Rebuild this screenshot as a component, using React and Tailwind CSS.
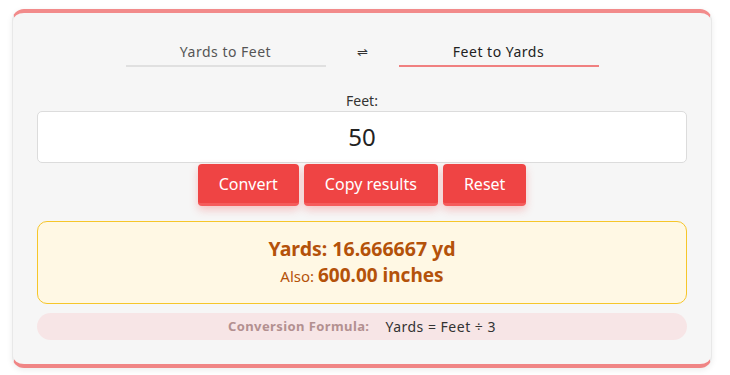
import React from "react";

export default function App() {
  return (
    <div className="w-[730px] h-[375px] bg-white pt-[9px] pl-[12px]" style={{ fontFamily: '"Noto Sans", "Open Sans", sans-serif' }}>
      <div className="w-[700px] h-[359px] bg-[#f6f6f6] rounded-[12px] border-t-[4px] border-b-[4px] border-x border-t-[#f28b8b] border-b-[#f08585] border-x-[#e8e8e8] shadow-[0_2px_6px_rgba(0,0,0,0.08)] px-[24px] pt-[29px]">
        <div className="flex justify-center items-end">
          <div className="w-[200px] text-center text-[14px] tracking-[0.5px] text-[#555] pb-[3px] border-b-2 border-[#e0e0e0] leading-[20px]">Yards to Feet</div>
          <div className="w-[73px] text-center text-[13px] text-[#333] pb-[5px] leading-[20px]">⇌</div>
          <div className="w-[200px] text-center text-[14px] tracking-[0.5px] text-[#222] pb-[3px] border-b-2 border-[#f08080] leading-[20px]">Feet to Yards</div>
        </div>
        <div className="mt-[24px] text-center text-[14px] leading-[20px] text-[#333]">Feet:</div>
        <div className="h-[52px] bg-white border border-[#dcdcdc] rounded-[5px] flex items-center justify-center text-[24px] text-[#222]">50</div>
        <div className="flex justify-center gap-[5px] mt-[1px]">
          <button className="h-[42px] px-[21px] bg-[#ef4444] text-white text-[16px] rounded-[4px] border-b-[3px] border-[#f55c5c] shadow-[0_4px_8px_rgba(239,68,68,0.28)]">Convert</button>
          <button className="h-[42px] px-[21px] bg-[#ef4444] text-white text-[16px] rounded-[4px] border-b-[3px] border-[#f55c5c] shadow-[0_4px_8px_rgba(239,68,68,0.28)]">Copy results</button>
          <button className="h-[42px] px-[21px] bg-[#ef4444] text-white text-[16px] rounded-[4px] border-b-[3px] border-[#f55c5c] shadow-[0_4px_8px_rgba(239,68,68,0.28)]">Reset</button>
        </div>
        <div className="mt-[15px] h-[83px] bg-[#fff8e4] border border-[#f6c62a] rounded-[10px] flex flex-col items-center justify-center text-[#b4520a]">
          <div className="text-[19.5px] font-bold leading-[27px]">Yards: 16.666667 yd</div>
          <div className="leading-[27px]"><span className="text-[15px]">Also: </span><span className="text-[19px] font-bold">600.00 inches</span></div>
        </div>
        <div className="mt-[9px] h-[27px] bg-[#f7e5e6] rounded-full flex items-center justify-center">
          <span className="font-bold text-[13px] tracking-[0.4px] text-[#b39090]">Conversion Formula:</span>
          <span className="ml-[16px] text-[14px] tracking-[0.5px] text-[#333]">Yards = Feet ÷ 3</span>
        </div>
      </div>
    </div>
  );
}
